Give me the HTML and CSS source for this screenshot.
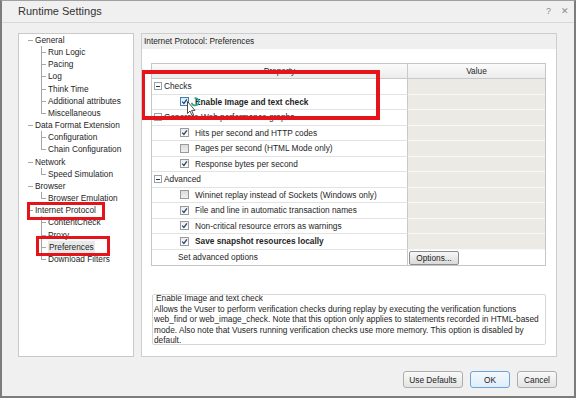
FILE: index.html
```html
<!DOCTYPE html>
<html lang="en">
<head>
  <meta charset="UTF-8">
  <title>Runtime Settings</title>
  <link rel="stylesheet" href="styles.css">
</head>
<body>
  <div class="dialog">
    <div class="titlebar">
      <span class="title">Runtime Settings</span>
      <span class="tb-btns"><span>?</span><span>&#x2715;</span></span>
    </div>

    <div class="main">
      <!-- settings tree -->
      <div class="tree">
        <div class="node">General</div>
        <div class="node child">Run Logic</div>
        <div class="node child">Pacing</div>
        <div class="node child">Log</div>
        <div class="node child">Think Time</div>
        <div class="node child">Additional attributes</div>
        <div class="node child last">Miscellaneous</div>
        <div class="node">Data Format Extension</div>
        <div class="node child">Configuration</div>
        <div class="node child last">Chain Configuration</div>
        <div class="node">Network</div>
        <div class="node child last">Speed Simulation</div>
        <div class="node">Browser</div>
        <div class="node child last">Browser Emulation</div>
        <div class="node">Internet Protocol</div>
        <div class="node child">ContentCheck</div>
        <div class="node child">Proxy</div>
        <div class="node child"><span class="selected">Preferences</span></div>
        <div class="node child last">Download Filters</div>
      </div>

      <!-- page -->
      <div class="page">
        <div class="page-head">Internet Protocol: Preferences</div>
        <div class="page-body">
          <div class="grid">
            <div class="grid-head">
              <div class="head-prop">Property</div>
              <div class="head-val">Value</div>
            </div>

            <div class="row">
              <div class="prop group"><span class="expander"></span>Checks</div>
              <div class="val"></div>
            </div>
            <div class="row">
              <div class="prop opt"><span class="cb checked hover"><svg viewBox="0 0 7 7"><path d="M1.2 3.6 L2.9 5.4 L5.9 1.4"/></svg></span><b>Enable Image and text check</b></div>
              <div class="val"></div>
            </div>
            <div class="row">
              <div class="prop group"><span class="expander"></span>Generate Web performance graphs</div>
              <div class="val"></div>
            </div>
            <div class="row">
              <div class="prop opt"><span class="cb checked"><svg viewBox="0 0 7 7"><path d="M1.2 3.6 L2.9 5.4 L5.9 1.4"/></svg></span>Hits per second and HTTP codes</div>
              <div class="val"></div>
            </div>
            <div class="row">
              <div class="prop opt"><span class="cb"></span>Pages per second (HTML Mode only)</div>
              <div class="val"></div>
            </div>
            <div class="row">
              <div class="prop opt"><span class="cb checked"><svg viewBox="0 0 7 7"><path d="M1.2 3.6 L2.9 5.4 L5.9 1.4"/></svg></span>Response bytes per second</div>
              <div class="val"></div>
            </div>
            <div class="row">
              <div class="prop group"><span class="expander"></span>Advanced</div>
              <div class="val"></div>
            </div>
            <div class="row">
              <div class="prop opt"><span class="cb"></span>Wininet replay instead of Sockets (Windows only)</div>
              <div class="val"></div>
            </div>
            <div class="row">
              <div class="prop opt"><span class="cb checked"><svg viewBox="0 0 7 7"><path d="M1.2 3.6 L2.9 5.4 L5.9 1.4"/></svg></span>File and line in automatic transaction names</div>
              <div class="val"></div>
            </div>
            <div class="row">
              <div class="prop opt"><span class="cb checked"><svg viewBox="0 0 7 7"><path d="M1.2 3.6 L2.9 5.4 L5.9 1.4"/></svg></span>Non-critical resource errors as warnings</div>
              <div class="val"></div>
            </div>
            <div class="row">
              <div class="prop opt"><span class="cb checked"><svg viewBox="0 0 7 7"><path d="M1.2 3.6 L2.9 5.4 L5.9 1.4"/></svg></span><b>Save snapshot resources locally</b></div>
              <div class="val"></div>
            </div>
            <div class="row last-row">
              <div class="prop plain">Set advanced options</div>
              <div class="val"><button class="small-btn">Options...</button></div>
            </div>
          </div>

          <div class="desc">
            <div class="desc-text">
              <span class="desc-title">Enable Image and text check</span><br>
              Allows the Vuser to perform verification checks during replay by executing the verification functions<br>
              web_find or web_image_check. Note that this option only applies to statements recorded in HTML-based<br>
              mode. Also note that Vusers running verification checks use more memory. This option is disabled by<br>
              default.
            </div>
          </div>
        </div>
      </div>
    </div>

    <div class="footer">
      <button class="btn wide">Use Defaults</button>
      <button class="btn default">OK</button>
      <button class="btn">Cancel</button>
    </div>
  </div>

  <!-- annotations drawn on top of the screenshot -->
  <div class="mark mark-checks"></div>
  <div class="mark mark-ip"></div>
  <div class="mark mark-prefs"></div>
  <svg class="cursor" width="20" height="24" viewBox="0 0 20 24">
    <path d="M11.5 3.2 A3.6 3.6 0 1 1 8.6 7.8" fill="none" stroke="#2aa89a" stroke-width="1.6"/>
    <path d="M4.5 6.5 L4.5 18.5 L7 16 L9 20.5 L10.6 19.8 L8.6 15.4 L12 15.4 Z" fill="#fff" stroke="#222" stroke-width="0.8" stroke-linejoin="round"/>
  </svg>
</body>
</html>
```

FILE: styles.css
```css
* { box-sizing: border-box; }
body { margin: 0; font-family: "Liberation Sans", Arial, sans-serif; font-size: 8.3px; color: #1e1e1e; background: #fff; position: relative; }
button { font-family: inherit; font-size: 8.3px; color: #222; }

.dialog { width: 576px; height: 398px; background: #f0f0f0; border: 2px solid #7c7c7c; border-top: 1px solid #a0a0a0; display: flex; flex-direction: column; }
.titlebar { height: 22px; flex: none; border-bottom: 1px solid #d9d9d9; display: flex; align-items: center; justify-content: space-between; padding: 0 5px 1px 16px; }
.title { font-size: 11px; color: #333; }
.tb-btns { display: flex; gap: 10px; color: #8a8a8a; font-size: 9px; }

.main { display: flex; gap: 7px; padding: 10px 17px 0 16px; }

/* tree */
.tree { width: 116px; height: 324px; background: #fff; border: 1px solid #c9c9c9; }
.node { position: relative; height: 12.17px; line-height: 12.17px; padding-left: 16px; white-space: nowrap; }
.node::before { content: ""; position: absolute; left: 9px; top: 6px; width: 5px; border-top: 1px solid #a6a6a6; }
.node.child { padding-left: 29px; }
.node.child::before { left: 22px; top: 0; width: 0; height: 100%; border-top: none; border-left: 1px solid #a6a6a6; }
.node.child.last::before { height: 7px; }
.node.child::after { content: ""; position: absolute; left: 22px; top: 6px; width: 5px; border-top: 1px solid #a6a6a6; }
.selected { background: #e9e9e9; padding: 1px 1px; }

/* page */
.page { width: 416px; height: 324px; background: #fff; border: 1px solid #cdcdcd; }
.page-head { height: 15px; line-height: 15px; background: #efefef; padding-left: 2px; }
.page-body { padding: 14px 9px 0 9px; }

.grid { width: 395px; border: 1px solid #c6c6c6; }
.grid-head { display: flex; height: 15px; background: linear-gradient(#fbfbfb, #ececec); border-bottom: 1px solid #c9c9c9; line-height: 14px; }
.head-prop { width: 256px; text-align: center; border-right: 1px solid #c9c9c9; }
.head-val { flex: 1; text-align: center; }

.row { display: flex; height: 15.5px; }
.prop { width: 256px; display: flex; align-items: center; border-bottom: 1px solid #e3e3e3; border-right: 1px solid #c9c9c9; white-space: nowrap; }
.val { flex: 1; background: #ebeae4; border-bottom: 1px solid #f8f8f6; }
.last-row .prop, .last-row .val { border-bottom: none; background: #fff; }

.group { padding-left: 2px; }
.expander { position: relative; width: 8px; height: 8px; border: 1px solid #95a3b3; background: #fff; margin-right: 2px; }
.expander::after { content: ""; position: absolute; left: 1px; top: 2.5px; width: 4px; border-top: 1px solid #334; }
.opt { padding-left: 28px; }
.plain { padding-left: 26px; }

.cb { width: 9px; height: 9px; border: 1px solid #9a9a9a; background: linear-gradient(#dcdcdc, #efefef); margin-right: 6px; display: flex; }
.cb.checked { background: linear-gradient(#ececec, #fdfdfd); }
.cb.hover { border-color: #3d7fb4; background: linear-gradient(#d8ecf9, #f2f9fe); }
.cb svg { width: 7px; height: 7px; }
.cb path { fill: none; stroke: #2b4272; stroke-width: 1.3; }

.small-btn { margin: 1px 0 0 1px; width: 50px; height: 14px; padding: 0; line-height: 12px; border: 1px solid #8c8c8c; border-radius: 2px; background: linear-gradient(#f8f8f8, #dadada); }

.desc { width: 394px; height: 51px; margin: 28px 0 0 1px; border: 1px solid #d6d6d6; border-radius: 2px; padding-left: 1px; overflow: hidden; }
.desc-text { margin-top: -2px; line-height: 10.6px; white-space: nowrap; }
.desc-title { margin-left: 2px; }

.footer { display: flex; justify-content: flex-end; gap: 7px; padding: 14px 17px 0 0; }
.btn { width: 40px; height: 17px; padding: 0; border: 1px solid #adadad; border-radius: 3px; background: linear-gradient(#f9f9f9, #e4e4e4); }
.btn.wide { width: 60px; }
.btn.default { border-color: #6fa4d9; background: linear-gradient(#f3f8fd, #dfedfa); }

/* annotations */
.mark { position: absolute; border: 3px solid #e5141b; }
.mark-checks { left: 142px; top: 70px; width: 238px; height: 50px; border-width: 4px 4px 4px 3px; }
.mark-ip { left: 27px; top: 202px; width: 78px; height: 18px; }
.mark-prefs { left: 36px; top: 236px; width: 74px; height: 20px; }
.cursor { position: absolute; left: 183px; top: 95px; }
```
